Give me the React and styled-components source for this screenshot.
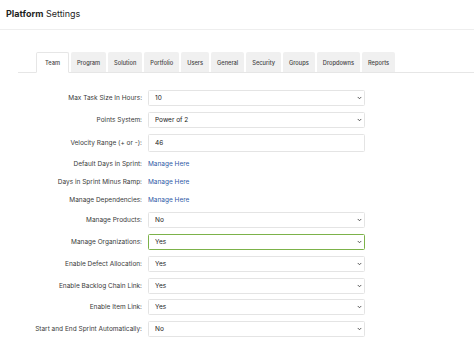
import React from 'react'
import styled, { createGlobalStyle, css } from 'styled-components'

const GlobalStyle = createGlobalStyle`
  body {
    margin: 0;
    background: #fff;
    font-family: Inter, "Noto Sans", sans-serif;
    color: #333;
  }
`

const tabs = ['Team', 'Program', 'Solution', 'Portfolio', 'Users', 'General', 'Security', 'Groups', 'Dropdowns', 'Reports']

const fields = [
  { label: 'Max Task Size In Hours:', type: 'select', value: '10' },
  { label: 'Points System:', type: 'select', value: 'Power of 2' },
  { label: 'Velocity Range (+ or -):', type: 'text', value: '46' },
  { label: 'Default Days in Sprint:', type: 'link' },
  { label: 'Days in Sprint Minus Ramp:', type: 'link' },
  { label: 'Manage Dependencies:', type: 'link' },
  { label: 'Manage Products:', type: 'select', value: 'No' },
  { label: 'Manage Organizations:', type: 'select', value: 'Yes', focused: true },
  { label: 'Enable Defect Allocation:', type: 'select', value: 'Yes' },
  { label: 'Enable Backlog Chain Link:', type: 'select', value: 'Yes' },
  { label: 'Enable Item Link:', type: 'select', value: 'Yes' },
  { label: 'Start and End Sprint Automatically:', type: 'select', value: 'No' },
]

const Chevron = () => (
  <ChevronIcon viewBox="0 0 10 10" width="5" height="5">
    <path d="M2 3.5 L5 6.5 L8 3.5" fill="none" stroke="#333" strokeWidth="1.6" strokeLinecap="round" strokeLinejoin="round" />
  </ChevronIcon>
)

const App = () => {
  return (
    <Page>
      <GlobalStyle />
      <Header>
        <Title><b>Platform</b> Settings</Title>
      </Header>
      <Body>
        <TabBar>
          {tabs.map((t, i) => (
            <Tab key={t} $active={i === 0}>{t}</Tab>
          ))}
        </TabBar>
        <Form>
          {fields.map((f) => (
            <Row key={f.label} $type={f.type}>
              <Label>{f.label}</Label>
              {f.type === 'link' && <Link href="#">Manage Here</Link>}
              {f.type === 'text' && <TextInput defaultValue={f.value} />}
              {f.type === 'select' && (
                <SelectWrap>
                  <Select defaultValue={f.value} $focused={f.focused}>
                    <option>{f.value}</option>
                  </Select>
                  <Chevron />
                </SelectWrap>
              )}
            </Row>
          ))}
        </Form>
      </Body>
    </Page>
  )
}

export default App

const Page = styled.div`
  width: 474px;
  min-height: 349px;
`

const Header = styled.header`
  height: 30px;
  border-bottom: 1px solid #eeeeee;
  padding: 0 6px 2px;
  display: flex;
  align-items: center;
  box-sizing: border-box;
`

const Title = styled.h1`
  margin: 0;
  font-size: 9px;
  font-weight: 400;
  color: #1f1f1f;
  b {
    font-weight: 700;
  }
`

const Body = styled.div`
  padding-top: 22px;
`

const TabBar = styled.nav`
  margin-left: 18px;
  padding-left: 18px;
  display: flex;
  gap: 2px;
  border-bottom: 1px solid #e6e6e6;
  height: 20px;
`

const Tab = styled.div`
  height: 20px;
  box-sizing: border-box;
  padding: 0 6px;
  display: flex;
  align-items: center;
  font-size: 5.7px;
  font-weight: 500;
  color: #444;
  background: #f0f0f0;
  border-radius: 2px 2px 0 0;
  ${(p) => p.$active && css`
    background: #fff;
    border: 1px solid #e6e6e6;
    border-bottom-color: #fff;
    height: 21px;
    padding: 0 8px;
  `}
`

const Form = styled.form`
  margin-top: 17px;
  display: flex;
  flex-direction: column;
  gap: 5.8px;
`

const Row = styled.div`
  display: flex;
  align-items: center;
  gap: 6px;
  height: ${(p) => (p.$type === 'link' ? '12.5px' : p.$type === 'text' ? '18px' : '16px')};
`

const Label = styled.label`
  width: 142px;
  text-align: right;
  font-size: 6.5px;
  color: #3a3a3a;
  white-space: nowrap;
`

const Link = styled.a`
  font-size: 6.5px;
  color: #2f58a6;
  text-decoration: none;
`

const fieldBase = css`
  display: block;
  width: 217px;
  height: 100%;
  box-sizing: border-box;
  border: 1px solid #e4e4e4;
  border-radius: 1.5px;
  background: #fff;
  font-family: Inter, "Noto Sans", sans-serif;
  font-size: 6.5px;
  color: #222;
  padding: 0 6px;
  outline: none;
  margin: 0;
`

const TextInput = styled.input`
  ${fieldBase}
`

const SelectWrap = styled.div`
  position: relative;
  height: 100%;
  display: flex;
`

const Select = styled.select`
  ${fieldBase}
  appearance: none;
  -webkit-appearance: none;
  ${(p) => p.$focused && css`
    border: 1.2px solid #7cb24a;
  `}
`

const ChevronIcon = styled.svg`
  position: absolute;
  right: 3px;
  top: 50%;
  transform: translateY(-50%);
  pointer-events: none;
`
